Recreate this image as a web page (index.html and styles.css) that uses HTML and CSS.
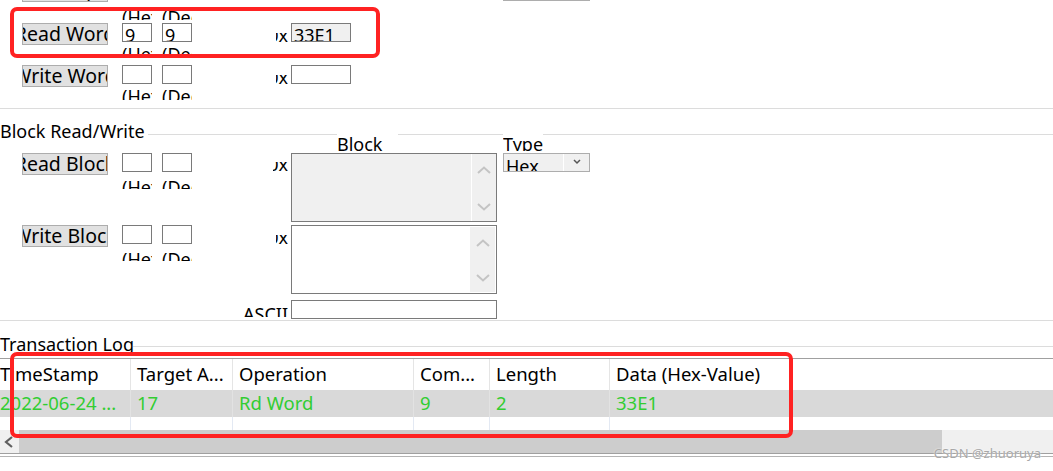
FILE: index.html
```html
<!DOCTYPE html>
<html lang="en">
<head>
  <meta charset="UTF-8">
  <title>SMBus Word / Block Access</title>
  <link rel="stylesheet" href="styles.css">
</head>
<body>
  <!-- word read/write -->
  <div class="word-group">
    <div class="word-rows">
      <div class="cmd-row row-cut">
        <div class="btn"><span>Write Byte</span></div>
        <div class="field"><div class="textbox"></div><div class="sub-label cut">(Hex)</div></div>
        <div class="field"><div class="textbox"></div><div class="sub-label cut">(Dec)</div></div>
        <div class="combo combo-cut"></div>
      </div>
      <div class="cmd-row">
        <div class="btn"><span>Read Word</span></div>
        <div class="field"><div class="textbox">9</div><div class="sub-label">(Hex)</div></div>
        <div class="field"><div class="textbox">9</div><div class="sub-label">(Dec)</div></div>
        <div class="hex-label narrow"><span>0x</span></div>
        <div class="textbox value readonly">33E1</div>
      </div>
      <div class="cmd-row">
        <div class="btn"><span>Write Word</span></div>
        <div class="field"><div class="textbox"></div><div class="sub-label">(Hex)</div></div>
        <div class="field"><div class="textbox"></div><div class="sub-label">(Dec)</div></div>
        <div class="hex-label narrow"><span>0x</span></div>
        <div class="textbox value"></div>
      </div>
    </div>
  </div>

  <!-- block read/write -->
  <div class="group-title block-title">
    <span class="title">Block Read/Write</span>
    <span class="rule"></span>
    <span class="col-label">Block</span>
    <span class="rule"></span>
    <span class="col-label">Type</span>
    <span class="rule"></span>
  </div>
  <div class="block-body">
    <div class="cmd-row block-row">
      <div class="btn"><span>Read Block</span></div>
      <div class="field"><div class="textbox"></div><div class="sub-label">(Hex)</div></div>
      <div class="field"><div class="textbox"></div><div class="sub-label">(Dec)</div></div>
      <div class="hex-label"><span>0x</span></div>
      <div class="memo readonly">
        <div class="memo-text"></div>
        <div class="vscroll">
          <svg width="14" height="8" viewBox="0 0 14 8"><polyline points="1,7 7,1.5 13,7" /></svg>
          <svg width="14" height="8" viewBox="0 0 14 8"><polyline points="1,1 7,6.5 13,1" /></svg>
        </div>
      </div>
      <div class="combo">
        <div class="combo-text">Hex</div>
        <div class="combo-arrow">
          <svg width="8" height="6" viewBox="0 0 8 6"><polyline points="1,1 4,4 7,1" /></svg>
        </div>
      </div>
    </div>
    <div class="cmd-row block-row">
      <div class="btn"><span>Write Block</span></div>
      <div class="field"><div class="textbox"></div><div class="sub-label">(Hex)</div></div>
      <div class="field"><div class="textbox"></div><div class="sub-label">(Dec)</div></div>
      <div class="hex-label narrow"><span>0x</span></div>
      <div class="memo">
        <div class="memo-text"></div>
        <div class="vscroll">
          <svg width="14" height="8" viewBox="0 0 14 8"><polyline points="1,7 7,1.5 13,7" /></svg>
          <svg width="14" height="8" viewBox="0 0 14 8"><polyline points="1,1 7,6.5 13,1" /></svg>
        </div>
      </div>
    </div>
    <div class="ascii-row">
      <div class="ascii-label">ASCII</div>
      <div class="textbox wide"></div>
    </div>
  </div>

  <!-- transaction log -->
  <div class="group-title log-title">
    <span class="title">Transaction Log</span>
    <span class="rule"></span>
  </div>
  <div class="log-wrap">
    <table class="log-table">
      <colgroup>
        <col style="width:137px"><col style="width:102px"><col style="width:181px">
        <col style="width:76px"><col style="width:120px"><col>
      </colgroup>
      <thead>
        <tr>
          <th>TimeStamp</th>
          <th>Target A...</th>
          <th>Operation</th>
          <th>Com...</th>
          <th>Length</th>
          <th>Data (Hex-Value)</th>
        </tr>
      </thead>
      <tbody>
        <tr class="hit">
          <td>2022-06-24 ...</td>
          <td>17</td>
          <td>Rd Word</td>
          <td>9</td>
          <td>2</td>
          <td>33E1</td>
        </tr>
        <tr class="blank">
          <td></td><td></td><td></td><td></td><td></td><td></td>
        </tr>
      </tbody>
    </table>
  </div>
  <div class="hscroll">
    <div class="hscroll-arrow">
      <svg width="12" height="14" viewBox="0 0 12 14"><polyline points="9,2 3,7 9,12" /></svg>
    </div>
    <div class="hscroll-thumb"></div>
  </div>
  <div class="log-bottom"></div>

  <!-- annotations -->
  <div class="mark mark-word"></div>
  <div class="mark mark-log"></div>
  <div class="watermark">CSDN @zhuoruya</div>
</body>
</html>
```

FILE: styles.css
```css
body { margin: 0; width: 1053px; height: 471px; overflow: hidden; background: #fff; color: #000; font-family: "Noto Sans", "Noto Sans CJK SC", sans-serif; font-size: 18px; line-height: 20px;}

/* shared controls */
.cmd-row { display: flex; align-items: flex-start; padding-left: 22px; height: 42px;}
.btn { width: 86px; height: 22px; box-sizing: border-box; background: #e1e1e1; border: 1px solid #adadad; display: flex; justify-content: center; overflow: hidden; white-space: nowrap; font-size: 19.5px;}
.field { width: 30px; margin-left: 10px;}
.btn + .field { margin-left: 14px;}
.textbox { height: 19px; box-sizing: border-box; border: 1px solid #7a7a7a; background: #fff; padding-left: 2px; overflow: hidden; white-space: nowrap; line-height: 23px;}
.textbox.readonly { background: #f0f0f0;}
.textbox.value { width: 60px; margin-left: 3px; padding-left: 2px;}
.textbox.wide { width: 206px; margin-left: 3px;}
.sub-label { height: 14px; margin-top: 2px; overflow: hidden; white-space: nowrap;}
.sub-label.cut { margin-top: 8px; height: 13px;}
.hex-label { width: 15px; height: 9px; margin-top: 9px; margin-left: 81px; overflow: hidden; display: flex; justify-content: flex-end; white-space: nowrap;}
.hex-label span { display: block; margin-top: -8px;}
.hex-label.narrow { width: 12px; margin-left: 84px; margin-top: 10px;}

.combo { width: 87px; height: 19px; box-sizing: border-box; border: 1px solid #adadad; background: #f0f0f0; margin-left: 6px; display: flex; overflow: hidden;}
.combo-text { flex: 1; padding-left: 2px; line-height: 24px;}
.combo-arrow { width: 26px; border-left: 1px solid #fff; display: flex; justify-content: center; padding-top: 5px; box-sizing: border-box;}
.combo-arrow polyline { fill: none; stroke: #555; stroke-width: 1.5;}

/* word group */
.word-group { height: 108px; border-bottom: 1px solid #dcdcdc; overflow: hidden;}
.word-rows { margin-top: -20px;}
.row-cut { height: 43px;}
.combo-cut { margin-left: 311px; margin-top: 2px;}

/* group titles */
.group-title { display: grid; white-space: nowrap;}
.group-title .title { overflow: visible;}
.rule { height: 1px; background: #dcdcdc;}
.block-title { margin-top: 12px; height: 32px; grid-template-columns: 148px 189px 61px 105px 40px 1fr;}
.block-title .rule { margin-top: 13px;}
.col-label { padding-top: 13px; height: 17px; overflow: hidden;}
.log-title { margin-top: 13px; height: 24px; grid-template-columns: 133px 1fr;}
.log-title .rule { margin-top: 12px;}

/* block group */
.block-body { border-bottom: 1px solid #dcdcdc; padding-bottom: 1px;}
.block-row { height: 69px; margin-bottom: 3px;}
.block-row + .block-row { margin-bottom: 6px;}
.block-row .sub-label { margin-top: 5px; height: 12px;}
.memo { width: 206px; height: 69px; box-sizing: border-box; margin-left: 3px; border: 1px solid #7a7a7a; background: #fff; display: flex;}
.memo-text { flex: 1;}
.vscroll { width: 25px; margin: 1px; background: #f0f0f0; display: flex; flex-direction: column; justify-content: space-between; align-items: center; padding: 12px 0 10px; box-sizing: border-box;}
.vscroll polyline { fill: none; stroke: #c4c4c4; stroke-width: 2;}
.memo.readonly { background: #f0f0f0;}
.memo.readonly .vscroll { margin: 0; border-left: 1px solid #fff;}
.ascii-row { display: flex; align-items: flex-start; padding-left: 243px; height: 19px;}
.ascii-label { width: 45px; height: 13px; margin-top: 4px; overflow: hidden; text-align: right; white-space: nowrap;}

/* transaction log */
.log-wrap { height: 71px; border-top: 1px solid #a0a0a0; overflow: hidden;}
.log-table { margin-left: -6px; width: 1059px; table-layout: fixed; border-collapse: separate; border-spacing: 0; font-size: 18.5px;}
.log-table th, .log-table td { padding: 0 6px; text-align: left; font-weight: normal; white-space: nowrap; overflow: hidden; border-right: 1px solid #e5e5e5;}
.log-table th { height: 31px; padding-top: 5px; padding-bottom: 6px; box-sizing: border-box; vertical-align: top;}
.log-table tr.hit td { background: #d9d9d9; color: #32cd32; height: 27px; box-sizing: border-box; padding-top: 3px; vertical-align: top; border-right-color: #e2e2e2;}
.log-table tr.blank td { height: 27px; border-right-color: #e3e9f3;}
.log-table th:last-child, .log-table td:last-child { border-right: none;}

.hscroll { display: flex; height: 24px; box-sizing: border-box; background: #f0f0f0; border-bottom: 1px solid #a0a0a0;}
.hscroll-arrow { width: 18px; display: flex; align-items: center; justify-content: center;}
.hscroll-arrow polyline { fill: none; stroke: #606060; stroke-width: 2.2;}
.hscroll-thumb { margin-left: 1px; width: 923px; background: #cdcdcd;}
.log-bottom { margin-top: 2px; height: 1px; background: #b4b4b4;}

/* red annotation frames + watermark */
.mark { position: absolute; border: 4px solid #ff2222; border-radius: 7px; box-sizing: border-box;}
.mark-word { left: 10px; top: 7px; width: 370px; height: 51px;}
.mark-log { left: 10px; top: 352px; width: 783px; height: 86px;}
.watermark { position: absolute; right: 12px; top: 445px; font-size: 13px; line-height: 16px; color: #a8a8a8; text-shadow: 0 0 2px #fff;}
```
